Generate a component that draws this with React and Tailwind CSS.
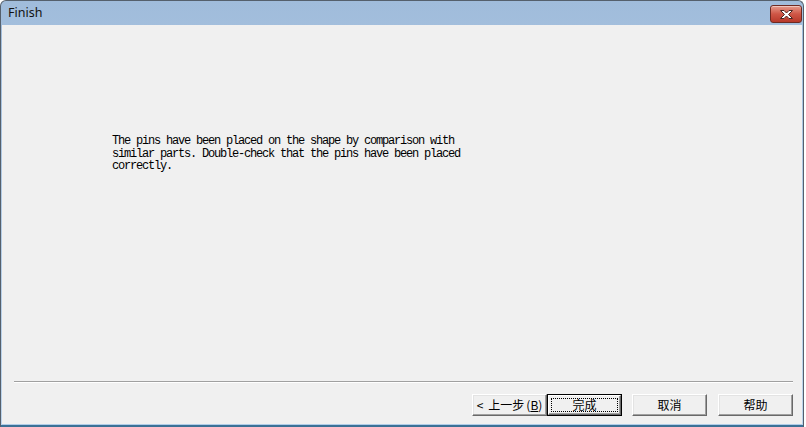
import React from "react";

function Btn({ children, isDefault }) {
  if (isDefault) {
    return (
      <div className="w-[75px] h-[22px] border border-black bg-[#f0f0f0] flex">
        <div className="flex-1 border-t border-l border-white border-r border-b border-r-[#696969] border-b-[#696969] shadow-[inset_-1px_-1px_0_#a0a0a0] flex p-[2px]">
          <div className="flex-1 border border-dotted border-black flex items-center justify-center text-[12px] leading-none text-black">
            {children}
          </div>
        </div>
      </div>
    );
  }
  return (
    <div className="w-[75px] h-[22px] bg-[#f0f0f0] border-t border-l border-white border-r border-b border-r-[#696969] border-b-[#696969] shadow-[inset_-1px_-1px_0_#a0a0a0,inset_1px_1px_0_#e3e3e3] flex items-center justify-center text-[12px] leading-none text-black">
      {children}
    </div>
  );
}

export default function App() {
  return (
    <div className="w-[806px] h-[427px] bg-white overflow-hidden" style={{ fontFamily: '"Noto Sans CJK SC", "Noto Sans", sans-serif' }}>
      <div className="w-[804px] h-[427px] flex flex-col border-x border-t border-[#55606c] rounded-t-[6px] bg-gradient-to-b from-[#a0bcdb] via-[#b3cce6] to-[#bcd4ec] overflow-hidden">
        {/* Title bar */}
        <div className="h-[24px] flex items-start justify-between pl-[7px] pr-[1px] pt-[4px]">
          <span className="text-[12.5px] leading-[16px] text-[#111]" style={{ fontFamily: '"Noto Sans", "Open Sans", sans-serif' }}>Finish</span>
          <div className="w-[32px] h-[18px] rounded-[3px] border border-[#6e2a22] bg-gradient-to-b from-[#e49a8c] via-[#cf5646] to-[#b8392a] shadow-[inset_0_1px_0_rgba(255,255,255,0.45)] flex items-center justify-center">
            <svg width="15" height="11" viewBox="0 0 15 11">
              <path d="M1.5 1.5 H5 L7.5 4 L10 1.5 H13.5 L9.5 5.5 L13.5 9.5 H10 L7.5 7 L5 9.5 H1.5 L5.5 5.5 Z" fill="#ffffff" stroke="#4a2622" strokeWidth="1" strokeLinejoin="round" />
            </svg>
          </div>
        </div>
        {/* Client area */}
        <div className="flex-1 flex flex-col px-[1px]">
          <div className="flex-1 flex flex-col bg-[#f0f0f0]">
            <div className="flex-1 pl-[110px] pt-[110px]">
              <p
                className="text-[12px] leading-[12.5px] tracking-[-1.2px] text-black whitespace-pre"
                style={{ fontFamily: '"Liberation Mono", monospace' }}
              >
                {"The pins have been placed on the shape by comparison with\nsimilar parts. Double-check that the pins have been placed\ncorrectly."}
              </p>
            </div>
            <div className="ml-[12px] mr-[9px] border-t border-[#a0a0a0] border-b border-b-white" />
            <div className="flex justify-end pr-[9px] pt-[11px] pb-[8px]">
              <Btn>
                <span className="flex items-center">
                  <span className="mr-[5px]">&lt;</span>
                  <span>上一步</span>
                  <span className="ml-[2px]">(<span className="underline">B</span>)</span>
                </span>
              </Btn>
              <Btn isDefault>完成</Btn>
              <div className="w-[10px]" />
              <Btn>取消</Btn>
              <div className="w-[11px]" />
              <Btn>帮助</Btn>
            </div>
          </div>
          <div className="h-[1px] bg-[#b0cde8]" />
        </div>
        <div className="h-[2px] bg-[#3b7196]" />
      </div>
    </div>
  );
}
